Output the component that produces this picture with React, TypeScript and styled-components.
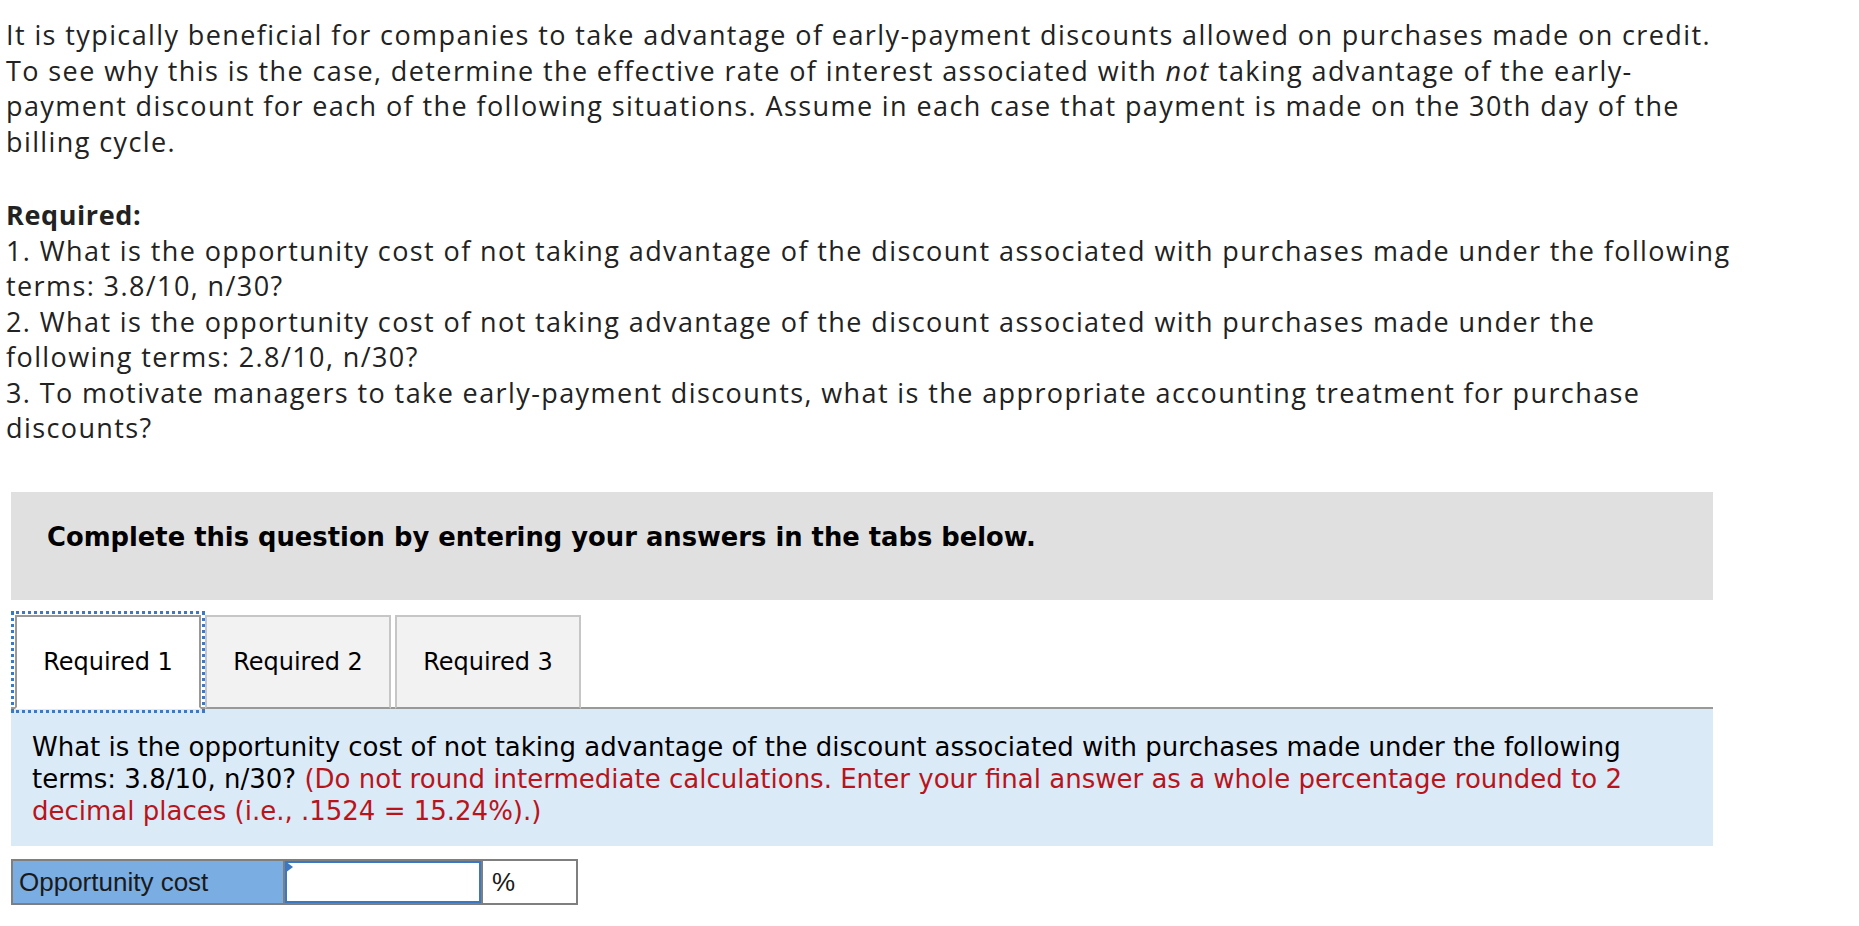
import React from "react";
import styled, { createGlobalStyle } from "styled-components";

const GlobalStyle = createGlobalStyle`
  html, body { margin: 0; padding: 0; background: #ffffff; }
  body { font-family: "Open Sans", "Liberation Sans", sans-serif; }
`;

const Page = styled.div`
  padding: 17px 0 0 6px;
  width: 1853px;
  box-sizing: border-box;
`;

const Prose = styled.div`
  font-family: "Open Sans", "Liberation Sans", sans-serif;
  font-size: 27px;
  letter-spacing: 1.4px;
  line-height: 35.5px;
  color: #222222;
  white-space: nowrap;
`;

const ProseBlock = styled.p<{ $gap?: number }>`
  margin: 0 0 ${(p) => p.$gap ?? 0}px 0;
`;

const Line = styled.span`
  display: block;
`;

const Heading = styled.strong`
  display: block;
  font-weight: 700;
  letter-spacing: 0.6px;
`;

const Widget = styled.section`
  margin: 46.5px 0 0 5px;
  width: 1702px;
`;

const Instructions = styled.div`
  height: 108px;
  box-sizing: border-box;
  background: #e0e0e0;
  padding: 30px 0 0 36px;
  font-family: "DejaVu Sans", Verdana, sans-serif;
  font-weight: 700;
  font-size: 25.8px;
  line-height: normal;
  color: #000000;
`;

const TabBar = styled.div`
  margin-top: 15px;
  display: flex;
  align-items: flex-end;
  gap: 4px;
  padding-left: 4px;
  border-bottom: 2px solid #999999;
`;

const Tab = styled.div<{ $active?: boolean }>`
  width: 186px;
  height: 94px;
  margin-bottom: -2px;
  box-sizing: border-box;
  display: flex;
  align-items: center;
  justify-content: center;
  font-family: "DejaVu Sans", Verdana, sans-serif;
  font-size: 24px;
  color: #000000;
  background: ${(p) => (p.$active ? "#ffffff" : "#f2f2f2")};
  border: 2px solid ${(p) => (p.$active ? "#999999" : "#c6c6c6")};
  border-bottom: 2px solid ${(p) => (p.$active ? "#ffffff" : "#999999")};
  outline: ${(p) => (p.$active ? "3px dotted #3b78c6" : "none")};
  outline-offset: 1px;
`;

const QuestionPanel = styled.div`
  background: #dbeaf7;
  padding: 22px 20px 19px 21px;
  font-family: "DejaVu Sans", Verdana, sans-serif;
  font-size: 26px;
  line-height: 32px;
  color: #000000;
  white-space: nowrap;
`;

const Hint = styled.span`
  color: #b8141c;
`;

const AnswerRow = styled.div`
  margin-top: 13px;
  display: inline-flex;
  border: 2px solid #7f7f7f;
  height: 46px;
  box-sizing: border-box;
`;

const LabelCell = styled.div`
  width: 272px;
  background: #7aade2;
  border-right: 2px solid #7f7f7f;
  display: flex;
  align-items: center;
  padding-left: 6px;
  box-sizing: border-box;
  font-family: "Liberation Sans", Arial, sans-serif;
  font-size: 26px;
  color: #1a1a1a;
`;

const InputCell = styled.div`
  position: relative;
  width: 198px;
  border-right: 2px solid #7f7f7f;
  box-sizing: border-box;
  background: #ffffff;
`;

const Field = styled.input`
  width: 100%;
  height: 100%;
  box-sizing: border-box;
  border: 2px solid #3b78c3;
  margin: 0;
  padding: 0 6px;
  font-family: "Liberation Sans", Arial, sans-serif;
  font-size: 22px;
  outline: none;
  background: #ffffff;
`;

const Marker = styled.span`
  position: absolute;
  top: 0;
  left: 0;
  width: 0;
  height: 0;
  border-top: 6px solid transparent;
  border-bottom: 6px solid transparent;
  border-left: 8px solid #3b78c3;
  pointer-events: none;
`;

const UnitCell = styled.div`
  width: 93px;
  background: #ffffff;
  display: flex;
  align-items: center;
  padding-left: 9px;
  box-sizing: border-box;
  font-family: "Liberation Sans", Arial, sans-serif;
  font-size: 26px;
  color: #1a1a1a;
`;

export default function App() {
  return (
    <>
      <GlobalStyle />
      <Page>
        <Prose>
          <ProseBlock $gap={38}>
            <Line>
              It is typically beneficial for companies to take advantage of early-payment discounts allowed on purchases made on credit.
            </Line>
            <Line>
              To see why this is the case, determine the effective rate of interest associated with <i>not</i> taking advantage of the early-
            </Line>
            <Line>
              payment discount for each of the following situations. Assume in each case that payment is made on the 30th day of the
            </Line>
            <Line>billing cycle.</Line>
          </ProseBlock>
          <ProseBlock>
            <Heading>Required:</Heading>
            <Line>
              1. What is the opportunity cost of not taking advantage of the discount associated with purchases made under the following
            </Line>
            <Line>terms: 3.8/10, n/30?</Line>
            <Line>
              2. What is the opportunity cost of not taking advantage of the discount associated with purchases made under the
            </Line>
            <Line>following terms: 2.8/10, n/30?</Line>
            <Line>
              3. To motivate managers to take early-payment discounts, what is the appropriate accounting treatment for purchase
            </Line>
            <Line>discounts?</Line>
          </ProseBlock>
        </Prose>

        <Widget>
          <Instructions>Complete this question by entering your answers in the tabs below.</Instructions>
          <TabBar>
            <Tab $active>Required 1</Tab>
            <Tab>Required 2</Tab>
            <Tab>Required 3</Tab>
          </TabBar>
          <QuestionPanel>
            <Line>
              What is the opportunity cost of not taking advantage of the discount associated with purchases made under the following
            </Line>
            <Line>
              terms: 3.8/10, n/30?{" "}
              <Hint>
                (Do not round intermediate calculations. Enter your final answer as a whole percentage rounded to 2
              </Hint>
            </Line>
            <Line>
              <Hint>decimal places (i.e., .1524 = 15.24%).)</Hint>
            </Line>
          </QuestionPanel>
          <AnswerRow>
            <LabelCell>Opportunity cost</LabelCell>
            <InputCell>
              <Field type="text" aria-label="Opportunity cost" />
              <Marker />
            </InputCell>
            <UnitCell>%</UnitCell>
          </AnswerRow>
        </Widget>
      </Page>
    </>
  );
}
